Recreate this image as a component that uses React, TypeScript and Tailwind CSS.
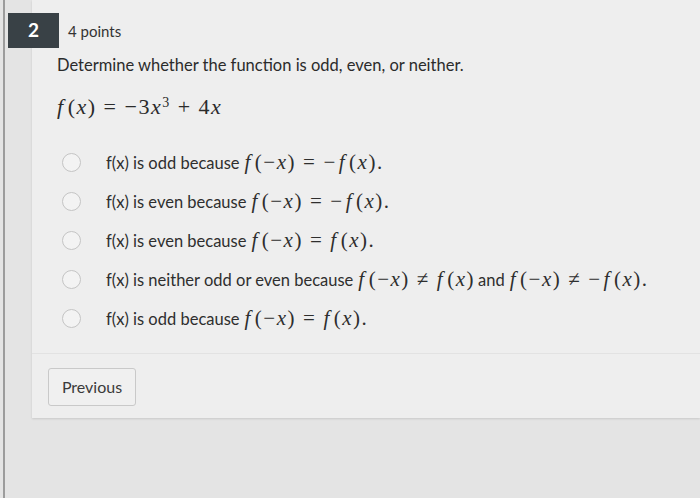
import React from "react";

const I = ({ children }: { children: React.ReactNode }) => (
  <span className="italic">{children}</span>
);
const Op = ({ children }: { children: React.ReactNode }) => (
  <span className="mx-[7px]">{children}</span>
);

function Fm({ neg = false }: { neg?: boolean }) {
  return (
    <>
      {neg && <span className="mr-[2px]">−</span>}
      <I>f</I>
      <span className="ml-[3px]">(</span>
      <I>x</I>
      <span>)</span>
    </>
  );
}
function Fnx() {
  return (
    <>
      <I>f</I>
      <span className="ml-[3px]">(−</span>
      <I>x</I>
      <span>)</span>
    </>
  );
}

const M = ({ children }: { children: React.ReactNode }) => (
  <span className="font-['Liberation_Serif',serif] text-[21px] tracking-[1.5px] ml-[5px]">{children}</span>
);

function Radio({ children }: { children: React.ReactNode }) {
  return (
    <div className="flex items-center h-[39px]">
      <div className="w-[19px] h-[19px] rounded-full border-[1.5px] border-[#c4c4c4] bg-[#f3f3f3] ml-[30px]" />
      <div className="ml-[25px] text-[16.5px] text-[#2e2e2e] flex items-baseline whitespace-nowrap">
        {children}
      </div>
    </div>
  );
}

export default function App() {
  return (
    <div className="w-[700px] h-[498px] bg-[#e4e4e4] flex overflow-hidden font-['Lato','Noto_Sans',sans-serif]">
      <div className="ml-[3px] w-[2px] h-full bg-[#9c9c9c] shrink-0" />
      <div className="ml-[27px] flex-1 h-[418px] bg-[#eeeeee] shadow-[0_1px_2px_rgba(0,0,0,0.12)] flex flex-col">
        <div className="flex items-center mt-[13px] h-[35px]">
          <div className="-ml-[24px] w-[51px] h-[35px] bg-[#394146] text-white font-bold text-[19px] flex items-center justify-center">
            2
          </div>
          <div className="ml-[9px] text-[15px] text-[#333] mt-[1px]">4 points</div>
        </div>
        <div className="ml-[25px] mt-[5px] text-[16.5px] text-[#2b2b2b] leading-[24px]">
          Determine whether the function is odd, even, or neither.
        </div>
        <div className="ml-[25px] mt-[17px] font-['Liberation_Serif',serif] text-[22px] tracking-[1.5px] text-[#2b2b2b] leading-[26px]">
          <I>f</I>
          <span className="ml-[3px]">(</span>
          <I>x</I>
          <span>)</span>
          <Op>=</Op>
          <span>−3</span>
          <I>x</I>
          <sup className="text-[14px]">3</sup>
          <Op>+</Op>
          <span>4</span>
          <I>x</I>
        </div>
        <div className="mt-[23px] flex flex-col">
          <Radio>
            f(x) is odd because
            <M>
              <Fnx />
              <Op>=</Op>
              <Fm neg />.
            </M>
          </Radio>
          <Radio>
            f(x) is even because
            <M>
              <Fnx />
              <Op>=</Op>
              <Fm neg />.
            </M>
          </Radio>
          <Radio>
            f(x) is even because
            <M>
              <Fnx />
              <Op>=</Op>
              <Fm />.
            </M>
          </Radio>
          <Radio>
            f(x) is neither odd or even because
            <M>
              <Fnx />
              <Op>≠</Op>
              <Fm />
            </M>
            <span className="ml-[3px]">and</span>
            <M>
              <Fnx />
              <Op>≠</Op>
              <Fm neg />.
            </M>
          </Radio>
          <Radio>
            f(x) is odd because
            <M>
              <Fnx />
              <Op>=</Op>
              <Fm />.
            </M>
          </Radio>
        </div>
        <div className="mt-auto mb-0 border-t border-[#e2e2e2] h-[65px] flex items-start">
          <button className="ml-[16px] mt-[14px] w-[88px] h-[38px] border border-[#c9c9c9] rounded-[3px] bg-[#f0f0f0] text-[16px] text-[#3a3a3a]">
            Previous
          </button>
        </div>
      </div>
    </div>
  );
}
